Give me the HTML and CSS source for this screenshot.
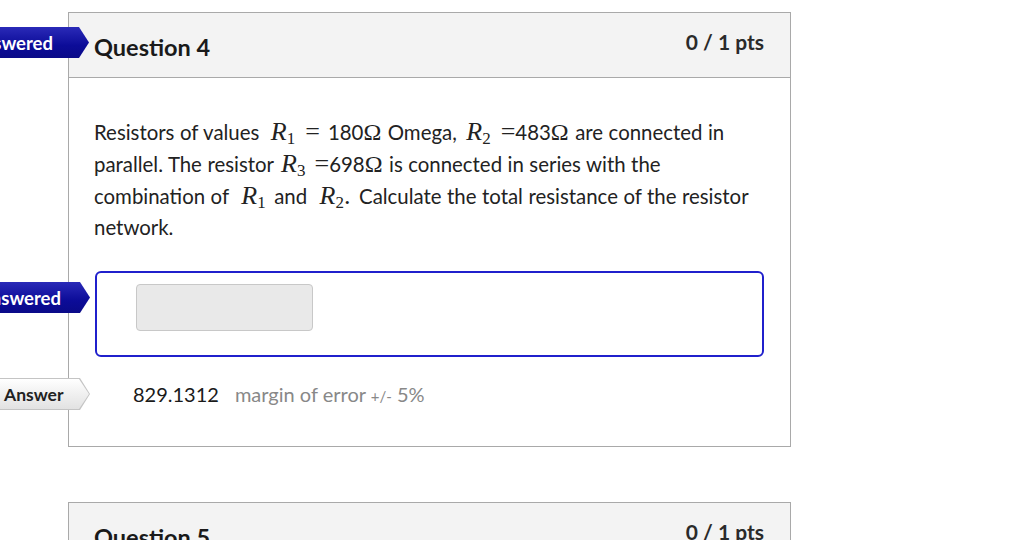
FILE: index.html
```html
<!DOCTYPE html>
<html>
<head>
<meta charset="utf-8">
<link rel="stylesheet" href="styles.css">
</head>
<body>
<div class="page">
  <div class="card">
    <div class="badge badge-blue badge-q"><span>Unanswered</span></div>
    <div class="card-head">
      <h2 class="title">Question 4</h2>
      <div class="pts">0 / 1 pts</div>
    </div>
    <div class="card-body">
      <p class="question">Resistors of values <span class="m m1"><i>R</i><sub>1</sub><span class="op">=</span></span>180<span class="om">Ω</span> Omega, <span class="m m2"><i>R</i><sub>2</sub><span class="op">=</span></span>483<span class="om">Ω</span> are connected in parallel. The resistor <span class="m m3"><i>R</i><sub>3</sub><span class="op">=</span></span>698<span class="om">Ω</span> is connected in series with the combination of <span class="m m4"><i>R</i><sub>1</sub></span> and <span class="m m4"><i>R</i><sub>2</sub>.</span> Calculate the total resistance of the resistor network.</p>
      <div class="answer-box">
        <div class="badge badge-blue badge-a"><span>Unanswered</span></div>
        <div class="input"></div>
      </div>
      <div class="answer-row">
        <div class="badge-gray"><div class="badge-gray-in"><span>Answer</span></div></div>
        <span class="val">829.1312</span>
        <span class="moe">margin of error <small>+/-</small> 5%</span>
      </div>
    </div>
  </div>
  <div class="card card2">
    <div class="card-head">
      <h2 class="title">Question 5</h2>
      <div class="pts">0 / 1 pts</div>
    </div>
  </div>
</div>
</body>
</html>
```

FILE: styles.css
```css
html, body {
  margin: 0;
  padding: 0;
  background: #fff;
  font-family: Lato, "Open Sans", sans-serif;
  color: #222;
  overflow: hidden;
}
.page {
  padding: 12px 0 0 68px;
  height: 528px;
}
.card {
  position: relative;
  width: 721px;
  border: 1px solid #a9a9a9;
  background: #fff;
}
.card2 {
  margin-top: 55px;
}
.card-head {
  height: 64px;
  background: #f3f3f3;
  border-bottom: 1px solid #a9a9a9;
  display: flex;
  justify-content: space-between;
  align-items: flex-start;
  padding: 0 26px 0 25px;
}
.title {
  margin: 18px 0 0 0;
  font-size: 23.5px;
  font-weight: 700;
  line-height: 32px;
  color: #1a1a1a;
}
.pts {
  margin-top: 14px;
  font-size: 21px;
  font-weight: 700;
  line-height: 30px;
  color: #2a2a2a;
}
.card-body {
  padding: 38px 26px 36px 25px;
}
.question {
  margin: 0;
  font-size: 20.4px;
  line-height: 31px;
  word-spacing: 0.3px;
  color: #222;
}
.m {
  font-family: "Liberation Serif", "Times New Roman", serif;
  font-size: 26px;
  word-spacing: 0;
}
.m i {
  font-style: italic;
}
.m sub {
  font-size: 17px;
  vertical-align: -4px;
  line-height: 0;
}
.m1 {
  margin-left: 6px;
}
.m1 .op {
  margin: 0 8px 0 10px;
}
.m2 {
  margin-left: 4px;
}
.m2 .op {
  margin: 0 0 0 10px;
}
.m3 {
  margin-left: 2px;
}
.m3 .op {
  margin: 0 0 0 9px;
}
.m4 {
  margin: 0 3px 0 7px;
}
.om {
  font-family: "Liberation Serif", "Times New Roman", serif;
  font-size: 24px;
  margin-right: 1px;
}
.answer-box {
  position: relative;
  margin: 28px 0 0 1px;
  border: 2px solid #2020cc;
  border-radius: 6px;
  padding: 11px 0 0 39px;
  box-sizing: border-box;
  height: 86px;
}
.input {
  width: 175px;
  height: 45px;
  background: #e9e9e9;
  border: 1px solid #c8c8c8;
  border-radius: 4px;
}
.answer-row {
  position: relative;
  display: flex;
  align-items: center;
  height: 32px;
  margin-top: 21px;
  padding-left: 39px;
  font-size: 20px;
}
.val {
  color: #1a1a1a;
  margin-right: 16px;
}
.moe {
  color: #888;
}
.moe small {
  font-size: 15px;
}
.badge {
  position: absolute;
  height: 31px;
  width: 200px;
  display: flex;
  align-items: center;
  justify-content: flex-end;
  padding-right: 36px;
  box-sizing: border-box;
  color: #fff;
  font-weight: 700;
  font-size: 18.5px;
  clip-path: polygon(0 0, 190px 0, 100% 50%, 190px 100%, 0 100%);
}
.badge-blue {
  background: linear-gradient(#2a2ab8, #0c0c98 60%, #0a0a88);
}
.badge-q {
  left: -180px;
  top: 14px;
}
.badge-a {
  left: -209px;
  top: 9px;
  width: 202px;
  clip-path: polygon(0 0, 192px 0, 100% 50%, 192px 100%, 0 100%);
  padding-right: 29px;
}
.badge-gray {
  position: absolute;
  left: -94px;
  top: 0;
  width: 90px;
  height: 32px;
  background: #c4c4c4;
  clip-path: polygon(0 0, 80px 0, 100% 50%, 80px 100%, 0 100%);
}
.badge-gray-in {
  position: absolute;
  left: 0;
  top: 1px;
  width: 89px;
  height: 30px;
  background: linear-gradient(#ffffff, #f0f0f0 50%, #e2e2e2);
  clip-path: polygon(0 0, 79px 0, 100% 50%, 79px 100%, 0 100%);
  display: flex;
  align-items: center;
  padding-left: 4px;
  box-sizing: border-box;
  font-size: 17.5px;
  font-weight: 700;
  color: #222;
}
```
